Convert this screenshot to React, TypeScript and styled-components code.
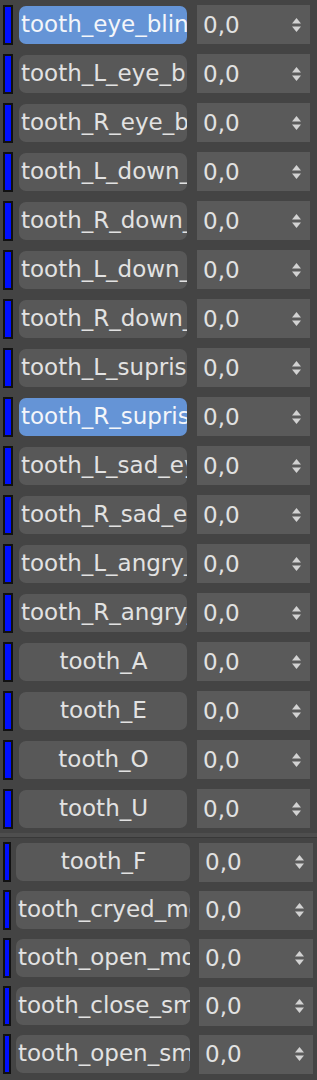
import React from "react";
import styled, { createGlobalStyle } from "styled-components";

const GlobalStyle = createGlobalStyle`
  html, body {
    margin: 0;
    padding: 0;
    background: #444444;
    font-family: "DejaVu Sans", Verdana, sans-serif;
  }
`;

interface PanelLayout {
  barWidth: number;
  barGap: number;
  buttonWidth: number;
  spinGap: number;
  spinWidth: number;
  rowHeight: number;
}

const topLayout: PanelLayout = {
  barWidth: 10,
  barGap: 6,
  buttonWidth: 168,
  spinGap: 10,
  spinWidth: 113,
  rowHeight: 49,
};

const bottomLayout: PanelLayout = {
  barWidth: 8,
  barGap: 5,
  buttonWidth: 174,
  spinGap: 9,
  spinWidth: 114,
  rowHeight: 48,
};

const Page = styled.div`
  width: 317px;
  height: 1080px;
  overflow: hidden;
  background: #444444;
`;

const Panel = styled.div`
  display: flex;
  flex-direction: column;
  padding-left: 3px;
`;

const Seam = styled.div`
  height: 4px;
  background: #4e4e4e;
  border-bottom: 1px solid #383838;
`;

const Row = styled.div<{ $layout: PanelLayout }>`
  display: flex;
  align-items: center;
  height: ${(p) => p.$layout.rowHeight}px;
`;

const ColorBar = styled.div<{ $width: number }>`
  box-sizing: border-box;
  width: ${(p) => p.$width}px;
  height: 40px;
  background: #0010ff;
  border: 2px solid #111111;
  flex-shrink: 0;
`;

const NameButton = styled.div<{ $width: number; $gap: number; $active?: boolean }>`
  box-sizing: border-box;
  margin-left: ${(p) => p.$gap}px;
  width: ${(p) => p.$width}px;
  height: 38px;
  line-height: 37px;
  padding: 0 1px 0 2px;
  border-radius: 7px;
  background: ${(p) => (p.$active ? "#6594d6" : "#585858")};
  color: ${(p) => (p.$active ? "#f4f6fa" : "#e2e2e2")};
  font-size: 23px;
  text-align: center;
  white-space: nowrap;
  overflow: hidden;
  text-overflow: clip;
  flex-shrink: 0;
`;

const Spinner = styled.div<{ $width: number; $gap: number }>`
  box-sizing: border-box;
  margin-left: ${(p) => p.$gap}px;
  width: ${(p) => p.$width}px;
  height: 39px;
  background: #5a5a5a;
  display: flex;
  align-items: center;
  justify-content: space-between;
  padding: 0 8px 0 6px;
  flex-shrink: 0;
`;

const SpinValue = styled.span`
  color: #e2e2e2;
  font-size: 23px;
`;

const SpinArrows = () => (
  <svg width="11" height="16" viewBox="0 0 11 16">
    <path d="M5.5 1 L10 6.5 L1 6.5 Z" fill="#d2d2d2" />
    <path d="M1 9.5 L10 9.5 L5.5 15 Z" fill="#d2d2d2" />
  </svg>
);

interface Channel {
  name: string;
  active?: boolean;
}

const topChannels: Channel[] = [
  { name: "tooth_eye_blink", active: true },
  { name: "tooth_L_eye_blink" },
  { name: "tooth_R_eye_blink" },
  { name: "tooth_L_down_eye" },
  { name: "tooth_R_down_eye" },
  { name: "tooth_L_down_brow" },
  { name: "tooth_R_down_brow" },
  { name: "tooth_L_suprise" },
  { name: "tooth_R_suprise", active: true },
  { name: "tooth_L_sad_eye" },
  { name: "tooth_R_sad_eye" },
  { name: "tooth_L_angry_eye" },
  { name: "tooth_R_angry_eye" },
  { name: "tooth_A" },
  { name: "tooth_E" },
  { name: "tooth_O" },
  { name: "tooth_U" },
];

const bottomChannels: Channel[] = [
  { name: "tooth_F" },
  { name: "tooth_cryed_mouth" },
  { name: "tooth_open_mouth" },
  { name: "tooth_close_smile" },
  { name: "tooth_open_smile" },
];

const ChannelRow: React.FC<{ channel: Channel; layout: PanelLayout }> = ({ channel, layout }) => (
  <Row $layout={layout}>
    <ColorBar $width={layout.barWidth} />
    <NameButton $width={layout.buttonWidth} $gap={layout.barGap} $active={channel.active}>
      {channel.name}
    </NameButton>
    <Spinner $width={layout.spinWidth} $gap={layout.spinGap}>
      <SpinValue>0,0</SpinValue>
      <SpinArrows />
    </Spinner>
  </Row>
);

const App: React.FC = () => (
  <Page>
    <GlobalStyle />
    <Panel>
      {topChannels.map((c) => (
        <ChannelRow key={c.name} channel={c} layout={topLayout} />
      ))}
    </Panel>
    <Seam />
    <Panel>
      {bottomChannels.map((c) => (
        <ChannelRow key={c.name} channel={c} layout={bottomLayout} />
      ))}
    </Panel>
  </Page>
);

export default App;
